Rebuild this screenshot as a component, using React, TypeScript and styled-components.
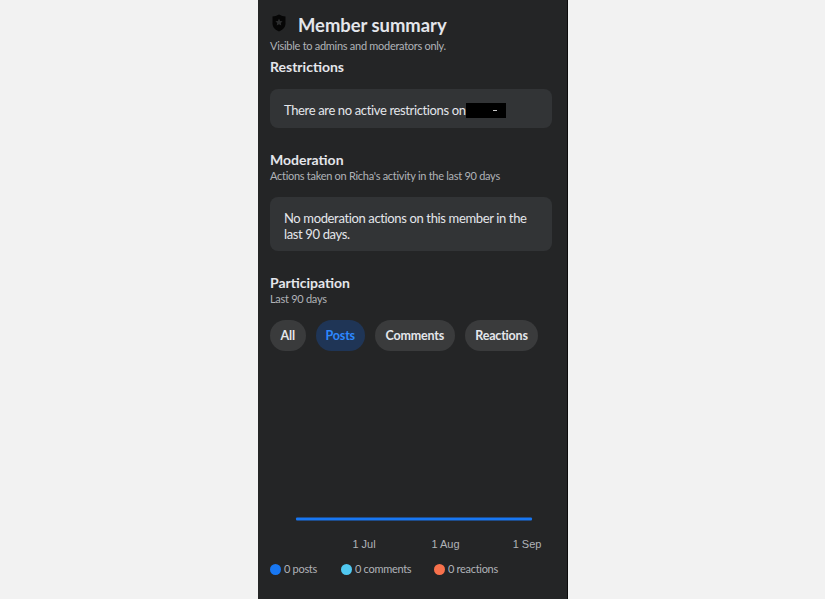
import React from "react";
import styled, { createGlobalStyle } from "styled-components";

const GlobalStyle = createGlobalStyle`
  html, body {
    margin: 0;
    padding: 0;
    height: 100%;
    background: #f2f2f2;
    font-family: Lato, "Open Sans", sans-serif;
  }
  * { box-sizing: border-box; }
`;

const Page = styled.div`
  display: flex;
  justify-content: flex-start;
  height: 599px;
  padding-left: 258px;
  overflow: hidden;
`;

const Panel = styled.div`
  width: 310px;
  height: 599px;
  padding: 12px 15px 0 12px;
  background: #242526;
  border-right: 1px solid #0b0b0b;
`;

const Header = styled.div`
  display: flex;
  align-items: center;
  height: 26px;
`;

const HeaderIcon = styled.div`
  display: flex;
  width: 18px;
  height: 20px;
  margin: -4px 10px 0 0;
`;

const Title = styled.h1`
  margin: 0;
  font-size: 18.4px;
  line-height: 26px;
  font-weight: 700;
  color: #e4e6eb;
`;

const Caption = styled.div<{ $top: number }>`
  margin-top: ${(p) => p.$top}px;
  font-size: 11px;
  line-height: 14px;
  letter-spacing: -0.28px;
  color: #b0b3b8;
`;

const SectionTitle = styled.h2<{ $top: number }>`
  margin: ${(p) => p.$top}px 0 0;
  font-size: 14px;
  line-height: 18px;
  font-weight: 700;
  color: #e4e6eb;
`;

const Card = styled.div<{ $top: number }>`
  margin-top: ${(p) => p.$top}px;
  padding: 13px 14px 9px;
  border-radius: 8px;
  background: #323436;
  font-size: 13px;
  line-height: 16px;
  letter-spacing: -0.36px;
  color: #e4e6eb;
`;

const RestrictionText = styled.div`
  display: flex;
  align-items: center;
  height: 16px;
  margin-bottom: 1px;
`;

const Redacted = styled.span`
  display: flex;
  align-items: center;
  justify-content: flex-end;
  width: 40px;
  height: 15px;
  padding-right: 9px;
  background: #000;
`;

const RedactedMark = styled.span`
  width: 4px;
  height: 1px;
  background: #c8c8c8;
`;

const Pills = styled.div`
  display: flex;
  gap: 10.5px;
  margin-top: 14px;
`;

const Pill = styled.button<{ $active?: boolean; $w: number }>`
  width: ${(p) => p.$w}px;
  height: 31px;
  padding: 0;
  border: 0;
  border-radius: 16px;
  font-family: inherit;
  font-size: 12.5px;
  font-weight: 700;
  letter-spacing: -0.2px;
  color: ${(p) => (p.$active ? "#2d88ff" : "#e4e6eb")};
  background: ${(p) => (p.$active ? "#1f3556" : "#3a3b3c")};
`;

const Chart = styled.svg`
  display: block;
  width: 282px;
  height: 206px;
`;

const Legend = styled.div`
  display: flex;
  margin-top: 5px;
`;

const LegendItem = styled.div<{ $w: number }>`
  display: flex;
  align-items: center;
  width: ${(p) => p.$w}px;
  font-size: 11px;
  line-height: 14px;
  letter-spacing: -0.3px;
  color: #b0b3b8;
`;

const Dot = styled.span<{ $color: string }>`
  width: 11px;
  height: 11px;
  margin-right: 3px;
  border-radius: 50%;
  background: ${(p) => p.$color};
`;

const ShieldIcon = () => (
  <svg width="18" height="20" viewBox="0 0 18 20">
    <path
      d="M9 1.5c2.2 1.3 4.4 1.9 6.5 2v7c0 3.6-2.6 6.2-6.5 8-3.9-1.8-6.5-4.4-6.5-8v-7c2.1-.1 4.3-.7 6.5-2z"
      fill="#060606"
    />
    <path
      d="M9 5.6l1.1 2.3 2.5.3-1.8 1.7.5 2.5L9 11.2l-2.3 1.2.5-2.5-1.8-1.7 2.5-.3z"
      fill="#2c2d2e"
    />
  </svg>
);

const months = [
  { label: "1 Jul", x: 94 },
  { label: "1 Aug", x: 175.5 },
  { label: "1 Sep", x: 257 },
];

const legend = [
  { label: "0 posts", color: "#1877f2", w: 71 },
  { label: "0 comments", color: "#50c8f0", w: 93 },
  { label: "0 reactions", color: "#f7714c", w: 100 },
];

export default function App() {
  return (
    <>
      <GlobalStyle />
      <Page>
        <Panel>
          <Header>
            <HeaderIcon>
              <ShieldIcon />
            </HeaderIcon>
            <Title>Member summary</Title>
          </Header>
          <Caption $top={1}>Visible to admins and moderators only.</Caption>
          <SectionTitle $top={5}>Restrictions</SectionTitle>
          <Card $top={13}>
            <RestrictionText>
              There are no active restrictions on
              <Redacted>
                <RedactedMark />
              </Redacted>
            </RestrictionText>
          </Card>
          <SectionTitle $top={23}>Moderation</SectionTitle>
          <Caption $top={0}>Actions taken on Richa's activity in the last 90 days</Caption>
          <Card $top={14}>
            No moderation actions on this member in the last 90 days.
          </Card>
          <SectionTitle $top={23}>Participation</SectionTitle>
          <Caption $top={0}>Last 90 days</Caption>
          <Pills>
            <Pill $w={35.5}>All</Pill>
            <Pill $w={48.5} $active>
              Posts
            </Pill>
            <Pill $w={79.5}>Comments</Pill>
            <Pill $w={73}>Reactions</Pill>
          </Pills>
          <Chart viewBox="0 0 282 206">
            <rect x="26" y="166.5" width="236" height="3" rx="1" fill="#1877f2" />
            {months.map((m) => (
              <text
                key={m.label}
                x={m.x}
                y="197"
                textAnchor="middle"
                fontFamily="Liberation Sans, Arial, sans-serif"
                fontSize="11"
                fill="#b0b3b8"
              >
                {m.label}
              </text>
            ))}
          </Chart>
          <Legend>
            {legend.map((l) => (
              <LegendItem key={l.label} $w={l.w}>
                <Dot $color={l.color} />
                {l.label}
              </LegendItem>
            ))}
          </Legend>
        </Panel>
      </Page>
    </>
  );
}
